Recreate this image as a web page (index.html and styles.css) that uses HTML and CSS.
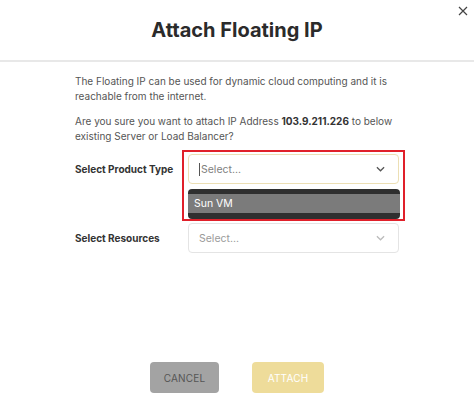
FILE: index.html
```html
<!doctype html>
<html lang="en">
  <head>
    <meta charset="UTF-8" />
    <title>Attach Floating IP</title>
    <link rel="stylesheet" href="styles.css">
  </head>
  <body>
    <div class="modal">
      <div class="modal-header">
        <h2 class="modal-title">Attach Floating IP</h2>
        <button class="close-btn" aria-label="Close">
          <svg viewBox="0 0 10 10" width="10" height="10">
            <path d="M1 1 L9 9 M9 1 L1 9" />
          </svg>
        </button>
      </div>

      <div class="modal-body">
        <p class="intro">The Floating IP can be used for dynamic cloud computing and it is reachable from the internet.</p>
        <p class="intro">Are you sure you want to attach IP Address <b>103.9.211.226</b> to below existing Server or Load Balancer?</p>

        <div class="form-row">
          <label class="form-label">Select Product Type</label>
          <div class="field">
            <div class="select focused">
              <span class="caret"></span>
              <span class="placeholder">Select...</span>
              <svg class="chevron" viewBox="0 0 10 6" width="9" height="6">
                <path d="M1 1 L5 5 L9 1" />
              </svg>
            </div>
            <div class="menu">
              <div class="option active">Sun VM</div>
            </div>
            <div class="highlight"></div>
          </div>
        </div>

        <div class="form-row">
          <label class="form-label">Select Resources</label>
          <div class="field">
            <div class="select disabled">
              <span class="placeholder">Select...</span>
              <svg class="chevron" viewBox="0 0 10 6" width="9" height="6">
                <path d="M1 1 L5 5 L9 1" />
              </svg>
            </div>
          </div>
        </div>
      </div>

      <div class="modal-footer">
        <button class="btn btn-cancel">CANCEL</button>
        <button class="btn btn-attach">ATTACH</button>
      </div>
    </div>
  </body>
</html>
```

FILE: styles.css
```css
body {
  margin: 0;
  background: #fff;
  font-family: Inter, "Noto Sans", sans-serif;
  color: #333;
}

.modal {
  position: relative;
  width: 474px;
  height: 401px;
}

.modal-header {
  display: flex;
  justify-content: center;
  align-items: center;
  height: 60px;
  border-bottom: 2px solid #e8e8e8;
}

.modal-title {
  margin: 0;
  font-size: 20px;
  font-weight: 700;
  color: #2b2b2b;
}

.close-btn {
  position: absolute;
  top: 6px;
  right: 6px;
  padding: 0;
  border: 0;
  background: none;
  line-height: 0;
}

.close-btn path {
  fill: none;
  stroke: #444;
  stroke-width: 1.2;
}

.modal-body {
  padding: 12px 75px 0 75px;
}

.intro {
  margin: 0 0 10px;
  font-size: 10px;
  line-height: 15px;
  color: #555;
}

.intro b {
  color: #333;
}

.form-row {
  display: flex;
  align-items: center;
  margin-top: 6px;
}

.form-row + .form-row {
  margin-top: 39px;
}

.form-label {
  width: 113px;
  font-size: 10px;
  font-weight: 700;
  color: #333;
}

.field {
  position: relative;
  flex: 1;
}

.select {
  display: flex;
  align-items: center;
  height: 28px;
  padding: 0 13px 0 10px;
  border: 1px solid #e4e4e4;
  border-radius: 4px;
  font-size: 10.5px;
}

.select.focused {
  border-color: #ecdfb4;
}

.caret {
  width: 1px;
  height: 13px;
  margin-right: 1px;
  background: #555;
}

.placeholder {
  flex: 1;
  color: #808080;
}

.select.disabled .placeholder {
  color: #9a9a9a;
}

.chevron path {
  fill: none;
  stroke: #555;
  stroke-width: 1.4;
}

.select.disabled .chevron path {
  stroke: #bbb;
}

.menu {
  position: absolute;
  top: 35px;
  left: 0;
  right: -1px;
  padding: 5px 0 6px;
  background: #2f2f2f;
  border-radius: 4px;
  z-index: 2;
}

.option {
  padding: 0 6px;
  height: 19px;
  line-height: 19px;
  font-size: 10.5px;
  color: #fff;
}

.option.active {
  background: #7b7b7b;
}

.highlight {
  position: absolute;
  top: -4px;
  left: -6px;
  right: -6px;
  height: 67px;
  border: 2px solid #e0202a;
  z-index: 3;
  pointer-events: none;
}

.modal-footer {
  display: flex;
  justify-content: center;
  gap: 33px;
  margin-top: 109px;
}

.btn {
  height: 31px;
  border: 0;
  border-radius: 4px;
  font-family: inherit;
  font-size: 10px;
  letter-spacing: 0.2px;
}

.btn-cancel {
  width: 69px;
  background: #a3a3a3;
  color: #555;
}

.btn-attach {
  width: 72px;
  background: #eedc9a;
  color: #fff;
}
```
